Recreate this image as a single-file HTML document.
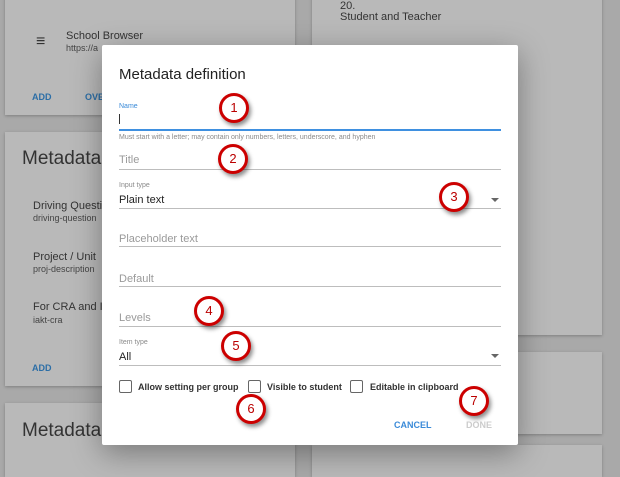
<!DOCTYPE html>
<html><head><style>
*{box-sizing:border-box;margin:0;padding:0}
html,body{width:620px;height:477px;overflow:hidden}
body{background:#a9a9a9;font-family:"Liberation Sans",sans-serif;position:relative;color:#2a2a2a}
.card{position:absolute;background:#b9b9b9;box-shadow:0 1px 3px rgba(0,0,0,.25)}
.a{position:absolute;white-space:nowrap}
.dlg{position:absolute;left:102px;top:45px;width:416px;height:400px;background:#fff;border-radius:2px;box-shadow:0 8px 30px rgba(0,0,0,.35)}
.lbl{position:absolute;left:17px;font-size:11px;color:#9a9a9a}
.line{position:absolute;left:17px;width:382px;height:1px;background:#bdbdbd}
.small{position:absolute;left:17px;font-size:7px;color:#8a8a8a}
.val{position:absolute;left:17px;font-size:11px;color:#222}
.cb{position:absolute;width:13px;height:13px;border:1.5px solid #666;border-radius:2px}
.cbl{position:absolute;font-size:9px;font-weight:bold;color:#333;white-space:nowrap}
.c{position:absolute;width:30px;height:30px;border-radius:50%;border:3px solid #c00;background:#fff;color:#b00;font-size:13px;text-align:center;line-height:24px;box-shadow:2px 3px 4px rgba(0,0,0,.45)}
.arr{position:absolute;width:0;height:0;border-left:4px solid transparent;border-right:4px solid transparent;border-top:4px solid #666}
</style></head><body>
<div class="card" style="left:5px;top:-5px;width:290px;height:120px"></div>
<div class="a" style="left:36px;top:33px;font-size:16px;color:#333">≡</div>
<div class="a" style="left:66px;top:30px;font-size:11px;color:#333">School Browser</div>
<div class="a" style="left:66px;top:43px;font-size:9px;color:#444">https://a</div>
<div class="a" style="left:32px;top:92px;font-size:9px;font-weight:bold;color:#2c6ea6">ADD</div>
<div class="a" style="left:85px;top:92px;font-size:9px;font-weight:bold;color:#2c6ea6">OVE</div>
<div class="card" style="left:5px;top:132px;width:290px;height:254px"></div>
<div class="a" style="left:22px;top:148px;font-size:19px;color:#333">Metadata f</div>
<div class="a" style="left:33px;top:200px;font-size:11px;color:#333">Driving Questi</div>
<div class="a" style="left:33px;top:213px;font-size:9px;color:#444">driving-question</div>
<div class="a" style="left:33px;top:251px;font-size:11px;color:#333">Project / Unit</div>
<div class="a" style="left:33px;top:264px;font-size:9px;color:#444">proj-description</div>
<div class="a" style="left:33px;top:301px;font-size:11px;color:#333">For CRA and IA</div>
<div class="a" style="left:33px;top:315px;font-size:9px;color:#444">iakt-cra</div>
<div class="a" style="left:32px;top:363px;font-size:9px;font-weight:bold;color:#2c6ea6">ADD</div>
<div class="card" style="left:5px;top:403px;width:290px;height:74px"></div>
<div class="a" style="left:22px;top:420px;font-size:19px;color:#333">Metadata f</div>
<div class="card" style="left:312px;top:-5px;width:290px;height:340px"></div>
<div class="a" style="left:340px;top:0px;font-size:11px;color:#333">20.</div>
<div class="a" style="left:340px;top:11px;font-size:11px;color:#333">Student and Teacher</div>
<div class="card" style="left:312px;top:352px;width:290px;height:82px"></div>
<div class="card" style="left:312px;top:445px;width:290px;height:32px"></div>

<div class="dlg">
<div class="a" style="left:17px;top:21px;font-size:15px;color:#222">Metadata definition</div>
<div class="small" style="top:58px;color:#3a8ad8">Name</div>
<div style="position:absolute;left:17px;top:69px;width:1px;height:10px;background:#333"></div>
<div class="line" style="top:84px;height:2px;background:#3f90e0"></div>
<div class="small" style="top:89px">Must start with a letter; may contain only numbers, letters, underscore, and hyphen</div>
<div class="lbl" style="top:109px">Title</div>
<div class="line" style="top:124px"></div>
<div class="small" style="top:137px">Input type</div>
<div class="val" style="top:149px">Plain text</div>
<div class="arr" style="left:389px;top:153px"></div>
<div class="line" style="top:163px"></div>
<div class="lbl" style="top:188px">Placeholder text</div>
<div class="line" style="top:201px"></div>
<div class="lbl" style="top:228px">Default</div>
<div class="line" style="top:241px"></div>
<div class="lbl" style="top:267px">Levels</div>
<div class="line" style="top:281px"></div>
<div class="small" style="top:294px">Item type</div>
<div class="val" style="top:306px">All</div>
<div class="arr" style="left:389px;top:309px"></div>
<div class="line" style="top:320px"></div>
<div class="cb" style="left:17px;top:335px"></div>
<div class="cbl" style="left:36px;top:337px">Allow setting per group</div>
<div class="cb" style="left:146px;top:335px"></div>
<div class="cbl" style="left:165px;top:337px">Visible to student</div>
<div class="cb" style="left:248px;top:335px"></div>
<div class="cbl" style="left:268px;top:337px">Editable in clipboard</div>
<div class="a" style="left:292px;top:375px;font-size:9px;font-weight:bold;color:#3a8ad8">CANCEL</div>
<div class="a" style="left:364px;top:375px;font-size:9px;font-weight:bold;color:#ccc">DONE</div>
</div>

<div class="c" style="left:219px;top:93px">1</div>
<div class="c" style="left:218px;top:144px">2</div>
<div class="c" style="left:439px;top:182px">3</div>
<div class="c" style="left:194px;top:296px">4</div>
<div class="c" style="left:221px;top:331px">5</div>
<div class="c" style="left:236px;top:394px">6</div>
<div class="c" style="left:459px;top:386px">7</div>
</body></html>
